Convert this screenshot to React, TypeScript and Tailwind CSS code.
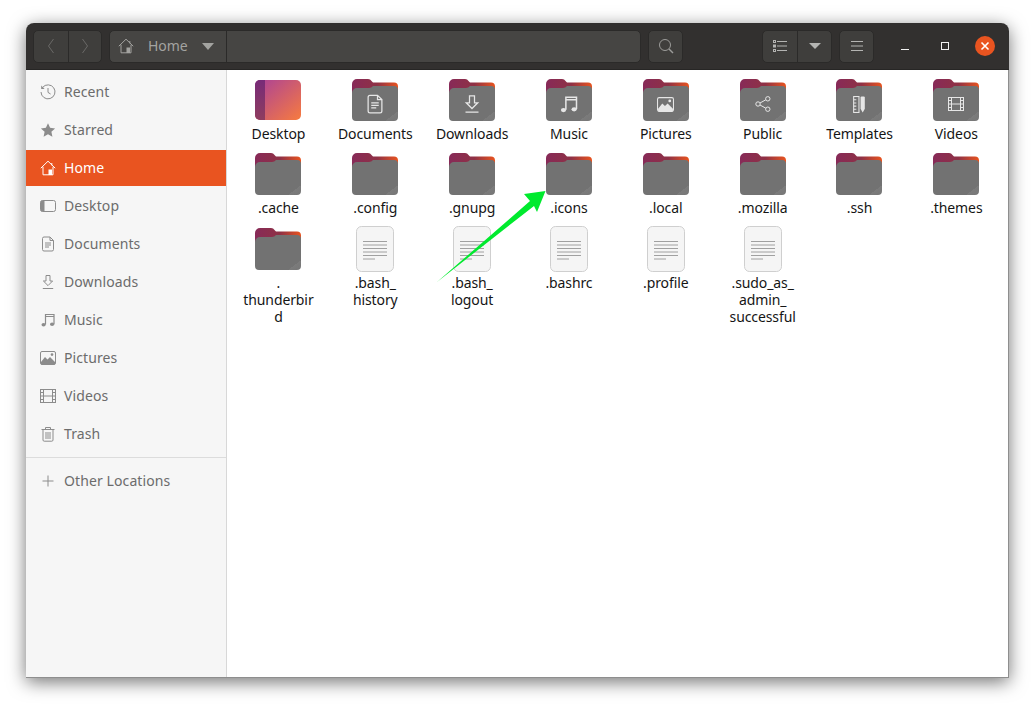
import React from 'react';

const FONT = "font-['Noto_Sans','Open_Sans',sans-serif]";

function Ico({ children, size = 16, className = '' }: { children: React.ReactNode; size?: number; className?: string }) {
  return (
    <svg width={size} height={size} viewBox="0 0 16 16" fill="none" stroke="currentColor" strokeWidth="1" className={`shrink-0 ${className}`}>
      {children}
    </svg>
  );
}

const HomeIcon = ({ className = '' }: { className?: string }) => (
  <Ico className={className}>
    <path d="M0.8 8.2 8 1.2l7.2 7M3 6.8v8h10v-8M11.8 3v2.4" />
    <rect x="8.5" y="9.5" width="3.5" height="5.5" fill="currentColor" stroke="none" />
  </Ico>
);
const RecentIcon = () => (
  <Ico>
    <path d="M2.6 3.4A7 7 0 1 1 1 8M8 4v4.4l2.6 1.6" />
    <path d="M1.2 1.5v3.4h3.4" fill="currentColor" stroke="none" />
  </Ico>
);
const StarIcon = () => (
  <Ico><path d="M8 1.2l2.1 4.6 5 .6-3.7 3.4 1 4.9L8 12.3l-4.4 2.4 1-4.9L.9 6.4l5-.6z" fill="currentColor" stroke="none" /></Ico>
);
const DesktopIcon = () => (
  <Ico>
    <rect x="0.5" y="2.5" width="15" height="11" rx="2" />
    <path d="M2.5 2.5H4.5V13.5H2.5A2 2 0 0 1 .5 11.5V4.5A2 2 0 0 1 2.5 2.5Z" fill="currentColor" stroke="none" />
  </Ico>
);
const DocIcon = ({ size = 16 }: { size?: number }) => (
  <Ico size={size}>
    <path d="M2.5 2.5a1.5 1.5 0 0 1 1.5-1.5h6l3.5 3.5v9a1.5 1.5 0 0 1-1.5 1.5H4a1.5 1.5 0 0 1-1.5-1.5zM10 1v3.5h3.5M5 7h6M5 9h6M5 11h4" />
  </Ico>
);
const DownloadIcon = ({ size = 16 }: { size?: number }) => (
  <Ico size={size}>
    <path d="M6 1.5h4v5.5h2.6L8 11.6 3.4 7H6zM2.8 14.5h10.4" />
  </Ico>
);
const MusicIcon = ({ size = 16 }: { size?: number }) => (
  <Ico size={size}>
    <path d="M5.5 12.5V2.5h8.5v9.5M5.5 4.5h8.5" strokeWidth="1.2" />
    <ellipse cx="3.6" cy="12.8" rx="2.1" ry="1.7" fill="currentColor" stroke="none" />
    <ellipse cx="12.1" cy="12.2" rx="2.1" ry="1.7" fill="currentColor" stroke="none" />
  </Ico>
);
const PictureIcon = ({ size = 16 }: { size?: number }) => (
  <Ico size={size}>
    <rect x="0.5" y="1.5" width="15" height="13" rx="1.5" />
    <path d="M1 12l4-5 2.5 2.5L10 7l5 5v2.5H1z" fill="currentColor" stroke="none" />
    <circle cx="12" cy="4.6" r="1.3" fill="currentColor" stroke="none" />
  </Ico>
);
const VideoIcon = ({ size = 16 }: { size?: number }) => (
  <Ico size={size}>
    <rect x="0.5" y="1.5" width="15" height="13" />
    <path d="M3.5 1.5v13M12.5 1.5v13M3.5 8h9M.5 4.5h3M.5 8h3M.5 11.5h3M12.5 4.5h3M12.5 8h3M12.5 11.5h3" />
  </Ico>
);
const ShareIcon = ({ size = 16 }: { size?: number }) => (
  <Ico size={size}>
    <circle cx="3" cy="8" r="2.2" />
    <circle cx="12.8" cy="2.8" r="2.2" />
    <circle cx="12.8" cy="13.2" r="2.2" />
    <path d="M5 7l5.8-3.2M5 9l5.8 3.2" />
  </Ico>
);
const TemplateIcon = ({ size = 16 }: { size?: number }) => (
  <Ico size={size}>
    <rect x="2.5" y="0.5" width="5" height="15" />
    <path d="M2.5 3.5h2.5M2.5 6.5h2.5M2.5 9.5h2.5M2.5 12.5h2.5" />
    <path d="M9 1.5a1 1 0 0 1 1-1h2a1 1 0 0 1 1 1V12l-2 3.5-2-3.5z" fill="currentColor" stroke="none" />
  </Ico>
);
const TrashIcon = () => (
  <Ico>
    <path d="M1.5 3.5h13M5.5 3.5V1.5h5v2M3 3.5v10.5a1.2 1.2 0 0 0 1.2 1.2h7.6a1.2 1.2 0 0 0 1.2-1.2V3.5M6 6v7M8 6v7M10 6v7" />
  </Ico>
);
const PlusIcon = () => (
  <Ico><path d="M8 2.5v11M2.5 8h11" /></Ico>
);

function Folder({ glyph }: { glyph?: React.ReactNode }) {
  return (
    <div className="relative w-[46px] h-[42px]">
      <svg width="46" height="42" viewBox="0 0 46 42" className="block">
        <defs>
          <linearGradient id="fback" x1="0" y1="0" x2="1" y2="0">
            <stop offset="0" stopColor="#872a58" />
            <stop offset="0.55" stopColor="#8f3145" />
            <stop offset="1" stopColor="#e9541f" />
          </linearGradient>
          <linearGradient id="ffront" x1="0" y1="0" x2="1" y2="1">
            <stop offset="0.86" stopColor="#727272" />
            <stop offset="0.86" stopColor="#7b7b7b" />
            <stop offset="1" stopColor="#767676" />
          </linearGradient>
        </defs>
        <path d="M0 5a5 5 0 0 1 5-5h11a4 4 0 0 1 3.5 2l1.5 1.5H42a4 4 0 0 1 4 4V20H0z" fill="url(#fback)" />
        <path d="M0 14a5 5 0 0 1 5-5h12a5 5 0 0 0 4-2h21a4 4 0 0 1 4 4v27a4 4 0 0 1-4 4H4a4 4 0 0 1-4-4z" fill="url(#ffront)" />
      </svg>
      {glyph && <div className="absolute inset-x-0 top-[13px] h-[24px] flex items-center justify-center text-[#e6e6e6]">{glyph}</div>}
    </div>
  );
}

function DesktopFolder() {
  return (
    <svg width="46" height="40" viewBox="0 0 46 40" className="block">
      <defs>
        <linearGradient id="dsk" x1="0" y1="0" x2="1" y2="1">
          <stop offset="0" stopColor="#a9409a" />
          <stop offset="1" stopColor="#f77b3f" />
        </linearGradient>
        <linearGradient id="dskb" x1="0" y1="0" x2="0" y2="1">
          <stop offset="0" stopColor="#772b78" />
          <stop offset="1" stopColor="#8f3d5f" />
        </linearGradient>
      </defs>
      <rect width="46" height="40" rx="5" fill="url(#dsk)" />
      <path d="M5 0h5v40H5a5 5 0 0 1-5-5V5a5 5 0 0 1 5-5z" fill="url(#dskb)" />
    </svg>
  );
}

function TextFile() {
  return (
    <svg width="38" height="46" viewBox="0 0 38 46" className="block">
      <rect x="0.5" y="0.5" width="37" height="45" rx="5" fill="#f5f5f5" stroke="#cfcfcf" />
      <path d="M7 15.5h24M7 19h24M7 22.5h24M7 26h24M7 29.5h24M7 33h12" stroke="#a0a0a0" strokeWidth="1" />
    </svg>
  );
}

type Item = { label: string; kind: 'desktop' | 'folder' | 'file'; glyph?: React.ReactNode };

const items: Item[] = [
  { label: 'Desktop', kind: 'desktop' },
  { label: 'Documents', kind: 'folder', glyph: <DocIcon size={20} /> },
  { label: 'Downloads', kind: 'folder', glyph: <DownloadIcon size={20} /> },
  { label: 'Music', kind: 'folder', glyph: <MusicIcon size={20} /> },
  { label: 'Pictures', kind: 'folder', glyph: <PictureIcon size={17} /> },
  { label: 'Public', kind: 'folder', glyph: <ShareIcon size={16} /> },
  { label: 'Templates', kind: 'folder', glyph: <TemplateIcon size={17} /> },
  { label: 'Videos', kind: 'folder', glyph: <VideoIcon size={16} /> },
  { label: '.cache', kind: 'folder' },
  { label: '.config', kind: 'folder' },
  { label: '.gnupg', kind: 'folder' },
  { label: '.icons', kind: 'folder' },
  { label: '.local', kind: 'folder' },
  { label: '.mozilla', kind: 'folder' },
  { label: '.ssh', kind: 'folder' },
  { label: '.themes', kind: 'folder' },
  { label: '.\nthunderbir\nd', kind: 'folder' },
  { label: '.bash_\nhistory', kind: 'file' },
  { label: '.bash_\nlogout', kind: 'file' },
  { label: '.bashrc', kind: 'file' },
  { label: '.profile', kind: 'file' },
  { label: '.sudo_as_\nadmin_\nsuccessful', kind: 'file' },
];

const places: { label: string; icon: React.ReactNode; active?: boolean }[] = [
  { label: 'Recent', icon: <RecentIcon /> },
  { label: 'Starred', icon: <StarIcon /> },
  { label: 'Home', icon: <HomeIcon />, active: true },
  { label: 'Desktop', icon: <DesktopIcon /> },
  { label: 'Documents', icon: <DocIcon /> },
  { label: 'Downloads', icon: <DownloadIcon /> },
  { label: 'Music', icon: <MusicIcon /> },
  { label: 'Pictures', icon: <PictureIcon /> },
  { label: 'Videos', icon: <VideoIcon /> },
  { label: 'Trash', icon: <TrashIcon /> },
];

function Place({ label, icon, active }: { label: string; icon: React.ReactNode; active?: boolean }) {
  return (
    <div className={`h-[36px] mb-[2px] pl-[14px] flex items-center gap-[8px] ${active ? 'bg-[#e95420] text-white' : 'text-[#6c6c6c]'}`}>
      <span className={active ? 'text-white' : 'text-[#8c8c8c]'}>{icon}</span>
      <span className="text-[14px] tracking-[0.1px] pb-[2px]">{label}</span>
    </div>
  );
}

const btn = 'h-[33px] bg-[#3f3e3c] border border-[#2b2a29] rounded-[5px] flex items-center justify-center';

export default function App() {
  return (
    <div className={`w-[1034px] h-[706px] bg-white pl-[26px] pt-[23px] overflow-hidden ${FONT}`}>
      <div className="relative w-[983px] h-[655px] flex flex-col rounded-t-[9px] shadow-[0_4px_18px_rgba(0,0,0,0.55)]">
        <header className="h-[47px] shrink-0 bg-[#32302f] rounded-t-[8px] border-b border-[#272625] pl-[7px] flex items-center">
          <div className={`${btn} w-[69px] text-[#6a6967]`}>
            <span className="w-[34px] flex justify-center">
              <svg width="8" height="16" viewBox="0 0 8 16" fill="none" stroke="currentColor"><path d="M6.5 1 1.5 8l5 7" /></svg>
            </span>
            <span className="w-px h-full bg-[#2b2a29]" />
            <span className="flex-1 flex justify-center">
              <svg width="8" height="16" viewBox="0 0 8 16" fill="none" stroke="currentColor"><path d="M1.5 1l5 7-5 7" /></svg>
            </span>
          </div>
          <div className="ml-[7px] w-[532px] h-[33px] bg-[#464543] border border-[#2b2a29] rounded-[5px] flex items-center text-[#a3a3a0]">
            <div className="w-[117px] h-full flex items-center border-r border-[#2b2a29]">
              <HomeIcon className="ml-[8px]" />
              <span className="ml-[14px] text-[14px] tracking-[-0.1px] pb-[1px]">Home</span>
              <span className="ml-[15px] w-0 h-0 border-x-[6px] border-x-transparent border-t-[7px] border-t-[#a3a3a0]" />
            </div>
          </div>
          <div className={`${btn} ml-[7px] w-[35px] text-[#9c9c9a]`}>
            <svg width="16" height="16" viewBox="0 0 16 16" fill="none" stroke="currentColor">
              <circle cx="7" cy="7" r="5.5" /><path d="M11 11l4 4" strokeWidth="1.5" />
            </svg>
          </div>
          <div className={`${btn} ml-[79px] w-[70px] text-[#b4b4b2]`}>
            <span className="w-[34px] flex justify-center">
              <svg width="14" height="12" viewBox="0 0 14 12" fill="none" stroke="currentColor">
                <path d="M4 1.5h10M4 6h10M4 10.5h10" />
                <rect x="0.5" y="0.5" width="2" height="2" /><rect x="0.5" y="5" width="2" height="2" /><rect x="0.5" y="9.5" width="2" height="2" />
              </svg>
            </span>
            <span className="w-px h-full bg-[#2b2a29]" />
            <span className="flex-1 flex justify-center">
              <span className="w-0 h-0 border-x-[6px] border-x-transparent border-t-[6px] border-t-[#b4b4b2]" />
            </span>
          </div>
          <div className={`${btn} ml-[7px] w-[35px] text-[#b4b4b2]`}>
            <svg width="12" height="10" viewBox="0 0 12 10" fill="none" stroke="currentColor"><path d="M0 .5h12M0 5h12M0 9.5h12" /></svg>
          </div>
          <div className="ml-[27px] w-[8px] h-[8px] flex items-end">
            <div className="w-full h-[1.5px] bg-[#f2f2f2]" />
          </div>
          <div className="ml-[32px] w-[8px] h-[8px] border-[1.5px] border-[#f2f2f2]" />
          <div className="ml-[26px] w-[20px] h-[20px] rounded-full bg-[#e95420] flex items-center justify-center">
            <svg width="10" height="10" viewBox="0 0 10 10" stroke="#fff" strokeWidth="1.6"><path d="M1.5 1.5l7 7M8.5 1.5l-7 7" /></svg>
          </div>
        </header>

        <div className="flex flex-1 min-h-0 border-b border-x border-[#8e8e8e]">
          <aside className="w-[200px] shrink-0 bg-[#f6f6f6] border-r border-[#d8d8d8] pt-[4px] -ml-px box-content">
            {places.map(p => <Place key={p.label} {...p} />)}
            <div className="mt-[5px] mb-[5px] h-px bg-[#dcdcdc]" />
            <Place label="Other Locations" icon={<PlusIcon />} />
          </aside>
          <main className="flex-1 bg-white pt-[6px] pl-[3px]">
            <div className="grid grid-cols-[repeat(8,96.85px)] grid-rows-[74px_75px_auto]">
              {items.map(it => (
                <div key={it.label} className="flex flex-col items-center">
                  <div className="h-[48px] flex items-center justify-center">
                    {it.kind === 'desktop' && <DesktopFolder />}
                    {it.kind === 'folder' && <Folder glyph={it.glyph} />}
                    {it.kind === 'file' && <TextFile />}
                  </div>
                  <div className="mt-[1px] text-center text-[14px] leading-[17px] tracking-[-0.1px] text-[#151515] whitespace-pre-line">{it.label}</div>
                </div>
              ))}
            </div>
          </main>
        </div>

        {/* green pointer arrow drawn over the file grid */}
        <svg width="120" height="100" viewBox="0 0 120 100" className="absolute left-[410px] top-[165px] pointer-events-none">
          <path d="M1 94 L94 13 L88 6 L109.5 3 L101 24 L98 18 Z" fill="#00ea2e" />
        </svg>
      </div>
    </div>
  );
}
